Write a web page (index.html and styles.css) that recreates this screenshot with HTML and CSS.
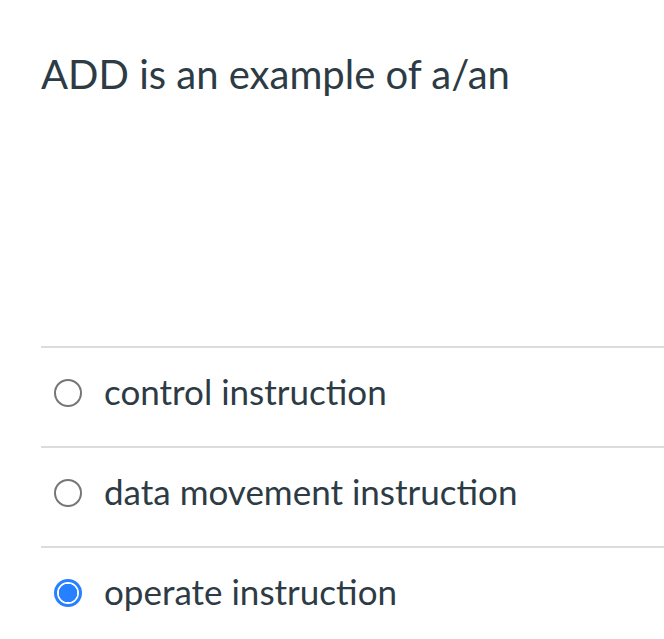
FILE: index.html
```html
<!DOCTYPE html>
<html>
<head>
<meta charset="utf-8">
<link rel="stylesheet" href="styles.css">
</head>
<body>
<div class="question">
  <div class="question-text">ADD is an example of a/an</div>
  <div class="answers">
    <label class="answer"><span class="radio"></span><span class="label">control instruction</span></label>
    <label class="answer"><span class="radio"></span><span class="label">data movement instruction</span></label>
    <label class="answer"><span class="radio checked"></span><span class="label">operate instruction</span></label>
  </div>
</div>
</body>
</html>
```
FILE: styles.css
```css
html, body {
  margin: 0;
  padding: 0;
  background: #fff;
}
body {
  font-family: Lato, "Open Sans", sans-serif;
  color: #2d3b45;
}
.question {
  padding-left: 41px;
}
.question-text {
  font-size: 40px;
  line-height: 48px;
  padding-top: 50px;
  height: 346px;
  box-sizing: border-box;
}
.answers {
  display: flex;
  flex-direction: column;
}
.answer {
  display: flex;
  align-items: center;
  height: 100px;
  border-top: 2px solid #dcdcdc;
  box-sizing: border-box;
  padding-left: 13px;
  padding-bottom: 12px;
}
.radio {
  width: 28px;
  height: 28px;
  border-radius: 50%;
  border: 2px solid #767676;
  box-sizing: border-box;
  flex: none;
  margin-right: 22px;
  margin-top: 4px;
}
.radio.checked {
  border: 3px solid #2680ff;
  background: radial-gradient(circle, #2680ff 0 9px, #fff 9.5px);
}
.label {
  font-size: 35px;
}
```
